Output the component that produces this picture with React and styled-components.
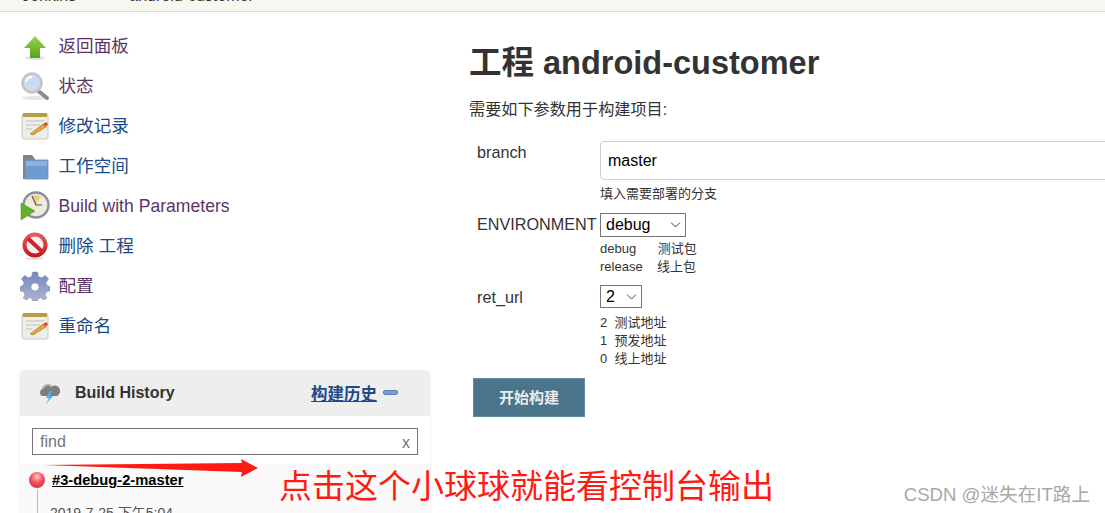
import React from 'react';
import styled, { createGlobalStyle } from 'styled-components';

const FONT = '"Liberation Sans", "Noto Sans CJK SC", sans-serif';

const Global = createGlobalStyle`
  html, body {
    margin: 0;
    padding: 0;
    background: #fff;
    overflow: hidden;
  }
  * { box-sizing: border-box; }
`;

const Page = styled.div`
  position: relative;
  width: 1105px;
  height: 513px;
  overflow: hidden;
  font-family: ${FONT};
  color: #333;
`;

const Crumbs = styled.div`
  height: 12px;
  display: flex;
  gap: 53px;
  padding-left: 22px;
  background: #f6f8f0;
  border-bottom: 1px solid #d8dacb;
  overflow: hidden;
  font-size: 16px;
  line-height: 16px;
  color: #333;
  & > span { margin-top: -12px; }
`;

const Columns = styled.div`
  display: flex;
`;

const Side = styled.aside`
  width: 469px;
  flex: none;
  padding: 14px 0 0 19px;
`;

const Tasks = styled.nav`
  display: flex;
  flex-direction: column;
`;

const Task = styled.a`
  height: 40px;
  display: flex;
  align-items: center;
  gap: 8.5px;
  padding-left: 1px;
  font-size: 17.6px;
  color: ${(p) => (p.$visited ? '#5c3566' : '#204a87')};
  & > svg { flex: none; }
`;

const TaskLabel = styled.span`
  margin-top: ${(p) => (p.$latin ? 0 : -3)}px;
`;

const Panel = styled.section`
  width: 412px;
  height: 200px;
  margin-top: 24px;
  border: 1px solid #f2f2f2;
  border-radius: 4px 4px 0 0;
`;

const PanelHead = styled.div`
  height: 45px;
  display: flex;
  align-items: center;
  padding: 0 32px 2px 17px;
  background: #eee;
  border-radius: 4px 4px 0 0;
`;

const PanelTitle = styled.span`
  margin-left: 14px;
  font-size: 16px;
  font-weight: 700;
  color: #333;
`;

const TrendLink = styled.a`
  margin-left: auto;
  font-size: 16.5px;
  font-weight: 700;
  color: #204a87;
  text-decoration: underline;
`;

const Collapse = styled.span`
  width: 15px;
  height: 5px;
  margin-left: 6px;
  background: #7f9fca;
  border: 1px solid #5c80b4;
  border-radius: 2px;
`;

const FindBox = styled.div`
  margin: 12px 12px 0;
  height: 27px;
  display: flex;
  align-items: center;
  justify-content: space-between;
  padding: 0 7px 0 7px;
  border: 1px solid #767676;
  font-size: 16px;
  color: #757575;
`;

const ClearX = styled.span`
  margin-top: 3px;
`;

const BuildRow = styled.div`
  margin-top: 9px;
  height: 200px;
  padding: 6px 0 0 9px;
  background: #fafafa;
  display: grid;
  grid-template-columns: 23px 1fr;
  grid-template-rows: 30px auto;
`;

const Ball = styled.span`
  width: 16px;
  height: 16px;
  margin-top: 2px;
  border-radius: 50%;
  background: radial-gradient(circle at 50% 30%, #ffc4c4 0, #ef4f55 45%, #c92a2f 100%);
`;

const BuildLink = styled.a`
  font-size: 14.7px;
  font-weight: 700;
  line-height: 20px;
  color: #000;
  text-decoration: underline;
`;

const Stem = styled.span`
  width: 1px;
  height: 30px;
  margin-top: -11px;
  margin-left: 8px;
  background: #bbb;
`;

const BuildDate = styled.span`
  margin-top: 2px;
  margin-left: -2px;
  font-size: 14px;
  color: #555;
`;

const Main = styled.main`
  flex: 1;
  min-width: 0;
`;

const Title = styled.h1`
  margin: 30px 0 0;
  font-size: 32.5px;
  line-height: 42px;
  font-weight: 700;
  color: #333;
  white-space: nowrap;
`;

const Intro = styled.p`
  margin: 15px 0 0;
  font-size: 16.15px;
  line-height: 20px;
  color: #333;
`;

const Params = styled.div`
  display: grid;
  grid-template-columns: 123px 1fr;
  margin-top: 22px;
  padding-left: 8px;
`;

const ParamLabel = styled.div`
  font-size: 16.2px;
  line-height: 20px;
  padding-top: ${(p) => p.$top}px;
  color: #333;
  white-space: nowrap;
`;

const ParamCell = styled.div`
  min-width: 0;
  margin-bottom: ${(p) => p.$gap || 0}px;
`;

const TextField = styled.div`
  width: 600px;
  height: 39px;
  display: flex;
  align-items: center;
  padding-left: 7px;
  border: 1px solid #ccc;
  border-radius: 4px;
  font-size: 16px;
  color: #000;
`;

const Dropdown = styled.div`
  width: ${(p) => p.$width}px;
  height: ${(p) => p.$height}px;
  display: flex;
  align-items: center;
  justify-content: space-between;
  padding: 0 4px 0 ${(p) => p.$pad}px;
  border: 1px solid #767676;
  font-size: 16px;
  color: #000;
`;

const Help = styled.div`
  margin-top: ${(p) => p.$top}px;
  font-size: 13px;
  line-height: 18px;
  color: #333;
  white-space: pre;
`;

const Submit = styled.button`
  display: block;
  width: 112px;
  height: 39px;
  margin: 10px 0 0 4px;
  padding: 0 0 2px;
  background: #4b758b;
  border: 1px solid #5f8aa1;
  color: #e8edf0;
  font-family: ${FONT};
  font-size: 15px;
  font-weight: 700;
`;

const Arrow = styled.svg`
  position: absolute;
  left: 42px;
  top: 455px;
`;

const Note = styled.div`
  position: absolute;
  left: 279px;
  top: 466px;
  font-size: 33px;
  line-height: 42px;
  color: #ff1a12;
  white-space: nowrap;
`;

const Watermark = styled.div`
  position: absolute;
  right: 15px;
  top: 484px;
  font-size: 18.6px;
  line-height: 22px;
  color: #a8a8a8;
  white-space: nowrap;
`;

const UpIcon = () => (
  <svg width="30" height="30" viewBox="0 0 30 30">
    <defs>
      <linearGradient id="upFill" x1="0" y1="0" x2="0" y2="1">
        <stop offset="0" stopColor="#9ad35a" />
        <stop offset="1" stopColor="#58a30e" />
      </linearGradient>
    </defs>
    <ellipse cx="15" cy="27" rx="10" ry="2" fill="#e2e2e2" />
    <path d="M15 5 L26 17 H20 V27 H10 V17 H4 Z" fill="url(#upFill)" />
  </svg>
);

const SearchIcon = () => (
  <svg width="30" height="30" viewBox="0 0 30 30">
    <ellipse cx="14" cy="27" rx="12" ry="2" fill="#e6e6e6" />
    <path d="M17 19 L27 27" stroke="#8d8d8d" strokeWidth="4" strokeLinecap="round" />
    <circle cx="12" cy="12" r="9.5" fill="#c9dcf0" stroke="#c4c4c4" strokeWidth="2.4" />
    <path d="M6 11 A6 6 0 0 1 12 6" stroke="#fff" strokeWidth="2" fill="none" />
  </svg>
);

const NotepadIcon = () => (
  <svg width="30" height="30" viewBox="0 0 30 30">
    <rect x="2" y="3" width="26" height="25" rx="2" fill="#efefe9" stroke="#c8c8c0" />
    <rect x="3" y="2" width="24" height="4" fill="#b89c45" />
    <path d="M6 10 H24 M6 14 H20 M6 18 H12" stroke="#cfcfc8" strokeWidth="1.4" />
    <path d="M10 23 L23 13 L26 16 L13 24 Z" fill="#e2a53a" stroke="#9b6c1d" strokeWidth=".5" />
    <path d="M23 13 L26 16 L28 13 L26 11 Z" fill="#e0483c" />
  </svg>
);

const FolderIcon = () => (
  <svg width="30" height="30" viewBox="0 0 30 30">
    <path d="M3 4 H12 L15 8 V28 H3 Z" fill="#85857d" />
    <path d="M5 9 H28 V28 H5 Z" fill="#6f9bd1" stroke="#6a8db8" strokeWidth=".8" />
    <path d="M6 10 H27 V15 H6 Z" fill="#8db2de" />
  </svg>
);

const ClockIcon = () => (
  <svg width="30" height="30" viewBox="0 0 30 30">
    <circle cx="16" cy="14" r="12.5" fill="#eeeadc" stroke="#8d8da0" strokeWidth="2.4" />
    <path d="M16 14 L12 5 A10 10 0 0 1 21 5.5 Z" fill="#e6d27a" />
    <path d="M12 5 L16 14 L22 14" stroke="#555" strokeWidth="1.2" fill="none" />
    <path d="M1 12 L15 20 L1 29 Z" fill="#62b02a" stroke="#4b8a1d" strokeWidth=".5" />
  </svg>
);

const StopIcon = () => (
  <svg width="30" height="30" viewBox="0 0 30 30">
    <defs>
      <linearGradient id="stopFill" x1="0" y1="0" x2="0" y2="1">
        <stop offset="0" stopColor="#e8585a" />
        <stop offset="1" stopColor="#c41b20" />
      </linearGradient>
    </defs>
    <ellipse cx="15" cy="27.5" rx="10" ry="1.5" fill="#e2e2e2" />
    <circle cx="15" cy="14" r="10.5" fill="#f6f1f1" stroke="url(#stopFill)" strokeWidth="4" />
    <path d="M8 7.5 L22 20.5" stroke="#d3232a" strokeWidth="4" />
  </svg>
);

const GearIcon = () => (
  <svg width="30" height="30" viewBox="0 0 30 30">
    <defs>
      <linearGradient id="gearFill" x1="0" y1="0" x2="0" y2="1">
        <stop offset="0" stopColor="#7089bb" />
        <stop offset="1" stopColor="#aeb2d0" />
      </linearGradient>
    </defs>
    <path
      fill="url(#gearFill)"
      stroke="#8189ad"
      strokeWidth=".5"
      fillRule="evenodd"
      d="M12.5 1 H17.5 L18.4 5.4 L21.6 6.8 L25.4 4.4 L28.6 8 L26 11.6 L27 14.6 L30 15.6 V20 L26.4 20.8 L25 24 L27 27 L23.4 29 L20.6 26.6 L18 27.8 L17.5 30 H12.5 L12 27.8 L9.4 26.6 L6.6 29 L3 27 L5 24 L3.6 20.8 L0 20 V15.6 L3 14.6 L4 11.6 L1.4 8 L4.6 4.4 L8.4 6.8 L11.6 5.4 Z M15 12 A4 4 0 1 0 15.01 12 Z"
    />
  </svg>
);

const CloudIcon = () => (
  <svg width="24" height="24" viewBox="0 0 24 24">
    <path d="M5 15 A4 4 0 0 1 5 8 A6 6 0 0 1 15 5 A5 5 0 0 1 20 15 Z" fill="#7d7d7d" />
    <path d="M6 8 A5 5 0 0 1 15 6" stroke="#bbb" strokeWidth="1.5" fill="none" />
    <path d="M13 10 L9 17 H12 L9 23 L16 15 H13 L15 10 Z" fill="#45b6ee" />
  </svg>
);

const Chevron = () => (
  <svg width="11" height="6" viewBox="0 0 11 6">
    <path d="M1 .5 L5.5 5 L10 .5" fill="none" stroke="#444" strokeWidth="1" />
  </svg>
);

const tasks = [
  { icon: <UpIcon />, text: '返回面板', visited: true },
  { icon: <SearchIcon />, text: '状态', visited: true },
  { icon: <NotepadIcon />, text: '修改记录' },
  { icon: <FolderIcon />, text: '工作空间' },
  { icon: <ClockIcon />, text: 'Build with Parameters', visited: true, latin: true },
  { icon: <StopIcon />, text: '删除 工程' },
  { icon: <GearIcon />, text: '配置', visited: true },
  { icon: <NotepadIcon />, text: '重命名' },
];

export default function App() {
  return (
    <Page>
      <Global />
      <Crumbs>
        <span>Jenkins</span>
        <span>android-customer</span>
      </Crumbs>
      <Columns>
        <Side>
          <Tasks>
            {tasks.map((t) => (
              <Task key={t.text} $visited={t.visited}>
                {t.icon}
                <TaskLabel $latin={t.latin}>{t.text}</TaskLabel>
              </Task>
            ))}
          </Tasks>
          <Panel>
            <PanelHead>
              <CloudIcon />
              <PanelTitle>Build History</PanelTitle>
              <TrendLink>构建历史</TrendLink>
              <Collapse />
            </PanelHead>
            <FindBox>
              find
              <ClearX>x</ClearX>
            </FindBox>
            <BuildRow>
              <Ball />
              <BuildLink>#3-debug-2-master</BuildLink>
              <Stem />
              <BuildDate>2019-7-25 下午5:04</BuildDate>
            </BuildRow>
          </Panel>
        </Side>
        <Main>
          <Title>工程 android-customer</Title>
          <Intro>需要如下参数用于构建项目:</Intro>
          <Params>
            <ParamLabel $top={1}>branch</ParamLabel>
            <ParamCell $gap={10}>
              <TextField>master</TextField>
              <Help $top={5}>填入需要部署的分支</Help>
            </ParamCell>
            <ParamLabel $top={1}>ENVIRONMENT</ParamLabel>
            <ParamCell $gap={9}>
              <Dropdown $width={86} $height={24} $pad={5}>
                debug
                <Chevron />
              </Dropdown>
              <Help $top={3}>{'debug      测试包\nrelease    线上包'}</Help>
            </ParamCell>
            <ParamLabel $top={2}>ret_url</ParamLabel>
            <ParamCell>
              <Dropdown $width={42} $height={23} $pad={5}>
                2
                <Chevron />
              </Dropdown>
              <Help $top={6}>{'2  测试地址\n1  预发地址\n0  线上地址'}</Help>
            </ParamCell>
          </Params>
          <Submit>开始构建</Submit>
        </Main>
      </Columns>
      <Arrow width="220" height="30" viewBox="0 0 220 30">
        <path d="M2 10 L200 8 L199 4 L216 13 L199 22 L200 17 Z" fill="#ff1a12" />
      </Arrow>
      <Note>点击这个小球球就能看控制台输出</Note>
      <Watermark>CSDN @迷失在IT路上</Watermark>
    </Page>
  );
}
